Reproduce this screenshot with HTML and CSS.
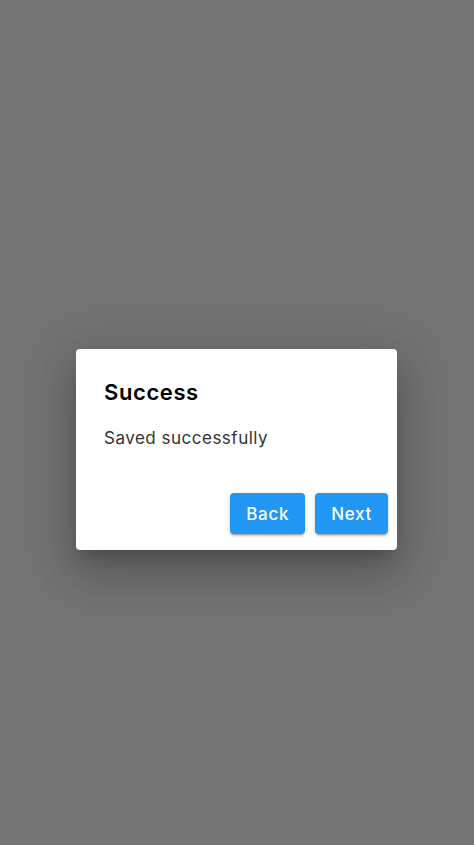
FILE: index.html
```html
<!DOCTYPE html>
<html lang="en">
<head>
<meta charset="utf-8">
<title>Success</title>
<link rel="stylesheet" href="styles.css">
</head>
<body>
<div class="overlay">
  <div class="dialog" role="dialog">
    <h2 class="title">Success</h2>
    <p class="message">Saved successfully</p>
    <div class="actions">
      <button class="btn">Back</button>
      <button class="btn">Next</button>
    </div>
  </div>
</div>
</body>
</html>
```
FILE: styles.css
```css
html, body {
  margin: 0;
  padding: 0;
  height: 100%;
}
body {
  background: #737373;
  font-family: Inter, "Noto Sans", sans-serif;
}
.overlay {
  box-sizing: border-box;
  height: 845px;
  padding: 349px 0 0 76px;
  display: flex;
  justify-content: flex-start;
  align-items: flex-start;
}
.dialog {
  width: 321px;
  height: 201px;
  box-sizing: border-box;
  background: #fff;
  border-radius: 4px;
  padding: 30px 9px 16px 28px;
  display: flex;
  flex-direction: column;
  box-shadow: 0 11px 15px -7px rgba(0,0,0,0.2), 0 24px 38px 3px rgba(0,0,0,0.14), 0 9px 46px 8px rgba(0,0,0,0.12);
}
.title {
  margin: 0;
  font-size: 22px;
  line-height: 26px;
  font-weight: 600;
  letter-spacing: 0.6px;
  color: #000;
}
.message {
  margin: 22px 0 0 0;
  font-size: 17px;
  line-height: 22px;
  font-weight: 400;
  letter-spacing: 0.5px;
  color: #333;
}
.actions {
  margin-top: auto;
  display: flex;
  justify-content: flex-end;
  gap: 10px;
}
.btn {
  height: 41px;
  padding: 0 16px;
  border: none;
  border-radius: 4px;
  background: #2196f3;
  color: #fff;
  font-family: Inter, "Noto Sans", sans-serif;
  font-size: 17px;
  font-weight: 500;
  letter-spacing: 0.7px;
  box-shadow: 0 3px 1px -2px rgba(0,0,0,0.2), 0 2px 2px 0 rgba(0,0,0,0.14), 0 1px 5px 0 rgba(0,0,0,0.12);
}
```
